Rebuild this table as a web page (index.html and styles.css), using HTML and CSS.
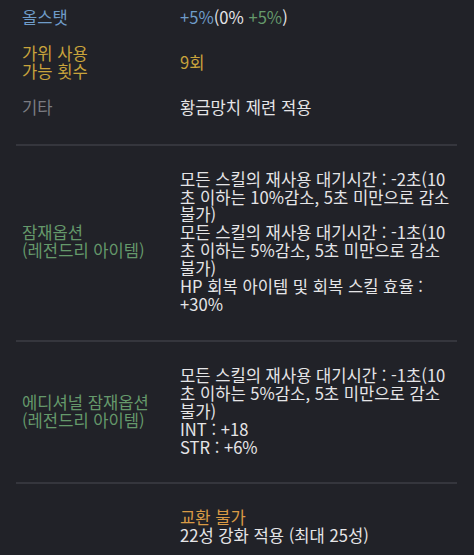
FILE: index.html
```html
<!DOCTYPE html>
<html lang="ko">
<head>
<meta charset="utf-8">
<link rel="stylesheet" href="styles.css">
</head>
<body>
<div class="panel">
  <section class="section section-first">
    <div class="row">
      <div class="label c-blue">올스탯</div>
      <div class="value"><span class="c-blue">+5%</span>(0% <span class="c-green">+5%</span>)</div>
    </div>
    <div class="row">
      <div class="label c-gold">가위 사용<br>가능 횟수</div>
      <div class="value c-gold">9회</div>
    </div>
    <div class="row">
      <div class="label c-gray">기타</div>
      <div class="value">황금망치 제련 적용</div>
    </div>
  </section>
  <section class="section">
    <div class="row">
      <div class="label c-green">잠재옵션<br>(레전드리 아이템)</div>
      <div class="value">모든 스킬의 재사용 대기시간 : -2초(10초 이하는 10%감소, 5초 미만으로 감소 불가)<br>모든 스킬의 재사용 대기시간 : -1초(10초 이하는 5%감소, 5초 미만으로 감소 불가)<br>HP 회복 아이템 및 회복 스킬 효율 : +30%</div>
    </div>
  </section>
  <section class="section">
    <div class="row">
      <div class="label c-green">에디셔널 잠재옵션<br>(레전드리 아이템)</div>
      <div class="value">모든 스킬의 재사용 대기시간 : -1초(10초 이하는 5%감소, 5초 미만으로 감소 불가)<br>INT : +18<br>STR : +6%</div>
    </div>
  </section>
  <section class="section section-last">
    <div class="row">
      <div class="label"></div>
      <div class="value"><span class="c-orange">교환 불가</span><br>22성 강화 적용 (최대 25성)</div>
    </div>
  </section>
</div>
</body>
</html>
```

FILE: styles.css
```css
html, body {
  margin: 0;
  padding: 0;
  background: #212228;
}
body {
  font-family: "Noto Sans CJK KR", "Noto Sans", sans-serif;
  font-size: 16.6px;
  line-height: 17.9px;
  color: #e5e5e7;
  width: 474px;
  height: 555px;
  overflow: hidden;
}
.panel {
  padding: 0 17px 0 16px;
}
.section {
  display: flex;
  flex-direction: column;
  gap: 18px;
  padding: 25px 0 26px;
  border-bottom: 2px solid #35363d;
}
.section-first {
  padding-top: 9px;
  padding-bottom: 27px;
}
.section-last {
  border-bottom: none;
}
.row {
  display: grid;
  grid-template-columns: 158px 1fr;
  align-items: center;
  padding: 0 4px 0 6px;
}
.c-blue { color: #6f9cc9; }
.c-green { color: #65996b; }
.c-gold { color: #c9a43c; }
.c-gray { color: #7b7c82; }
.c-orange { color: #d99a45; }
```
